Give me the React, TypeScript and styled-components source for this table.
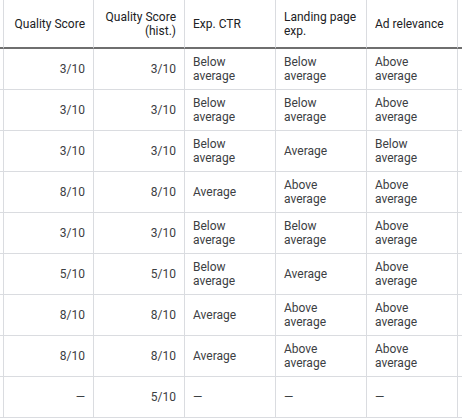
import React from "react";
import styled, { createGlobalStyle } from "styled-components";

const Global = createGlobalStyle`
  html, body { margin: 0; padding: 0; background: #ffffff; }
  body { font-family: Roboto, "Noto Sans", Arial, sans-serif; }
`;

const Viewport = styled.div`
  width: 462px;
  height: 418px;
  overflow: hidden;
  background: #fff;
`;

const Table = styled.div`
  display: grid;
  grid-template-columns: 4px 90px 91px 91px 91px 91px 40px;
  grid-auto-rows: 41px;
  grid-template-rows: 49px;
  font-size: 12px;
  line-height: 14px;
  color: #3c4043;
`;

const Cell = styled.div<{ $align?: "left" | "right"; $header?: boolean }>`
  box-sizing: border-box;
  display: flex;
  align-items: center;
  justify-content: ${(p) => (p.$align === "right" ? "flex-end" : "flex-start")};
  text-align: ${(p) => p.$align ?? "left"};
  padding: 0 8px 0 8px;
  border-right: 1px solid #dadce0;
  border-bottom: ${(p) => (p.$header ? "2px solid #6f6f6f" : "1px solid #dadce0")};
  color: ${(p) => (p.$header ? "#202124" : "#3c4043")};
  overflow: hidden;
`;

const Edge = styled(Cell)`
  padding: 0;
`;

type Row = [string, string, string, string, string];

const rows: Row[] = [
  ["3/10", "3/10", "Below average", "Below average", "Above average"],
  ["3/10", "3/10", "Below average", "Below average", "Above average"],
  ["3/10", "3/10", "Below average", "Average", "Below average"],
  ["8/10", "8/10", "Average", "Above average", "Above average"],
  ["3/10", "3/10", "Below average", "Below average", "Above average"],
  ["5/10", "5/10", "Below average", "Average", "Above average"],
  ["8/10", "8/10", "Average", "Above average", "Above average"],
  ["8/10", "8/10", "Average", "Above average", "Above average"],
  ["—", "5/10", "—", "—", "—"],
];

export default function App() {
  return (
    <Viewport>
      <Global />
      <Table>
        <Edge $header />
        <Cell $header $align="right">Quality Score</Cell>
        <Cell $header $align="right">Quality Score (hist.)</Cell>
        <Cell $header>Exp. CTR</Cell>
        <Cell $header>Landing page exp.</Cell>
        <Cell $header>Ad relevance</Cell>
        <Edge $header />
        {rows.map((r, i) => (
          <React.Fragment key={i}>
            <Edge />
            <Cell $align="right">{r[0]}</Cell>
            <Cell $align="right">{r[1]}</Cell>
            <Cell>{r[2]}</Cell>
            <Cell>{r[3]}</Cell>
            <Cell>{r[4]}</Cell>
            <Edge />
          </React.Fragment>
        ))}
      </Table>
    </Viewport>
  );
}
